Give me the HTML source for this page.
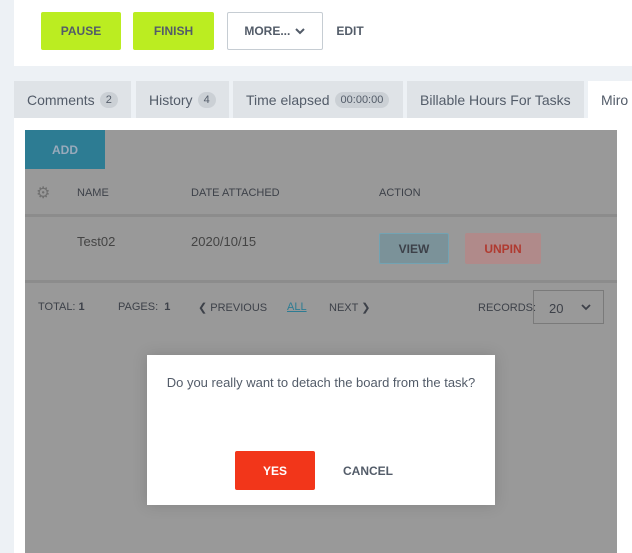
<!DOCTYPE html>
<html><head><style>
*{box-sizing:border-box;margin:0;padding:0}
body{width:632px;height:553px;overflow:hidden;background:#edf1f5;font-family:"Liberation Sans",sans-serif;position:relative}
.abs{position:absolute}
.card{left:14px;top:0;width:618px;height:66px;background:#fff}
.btn{position:absolute;top:12px;height:38px;font-size:12px;font-weight:bold;color:#535c69;display:flex;align-items:center;justify-content:center;border-radius:2px}
.g{background:#bbed21}
.tab{position:absolute;top:81px;height:37px;background:#dfe3e7;color:#535c69;font-size:14px;display:flex;align-items:center;padding-left:13px;white-space:nowrap;overflow:hidden}
.cnt{display:inline-block;background:#cbd0d5;border-radius:9px;font-size:11px;padding:2px 6px;margin-left:5px;color:#535c69}
.content{left:14px;top:118px;width:618px;height:435px;background:#fff}
.ov{left:25px;top:130px;width:592px;height:423px;background:#999}
.t{position:absolute;font-size:11px;color:#3d4149}
</style></head><body>
<div class="abs card"></div>
<div class="btn g" style="left:41px;width:80px">PAUSE</div>
<div class="btn g" style="left:133px;width:81px">FINISH</div>
<div class="btn" style="left:227px;width:96px;border:1px solid #c6cdd3">MORE...&nbsp;<svg width="12" height="8" viewBox="0 0 12 8"><path d="M2 2l4 4 4-4" stroke="#535c69" stroke-width="2" fill="none"/></svg></div>
<div class="btn" style="left:333px;width:34px">EDIT</div>
<div class="tab" style="left:14px;width:117px">Comments<span class="cnt">2</span></div>
<div class="tab" style="left:136px;width:93px">History<span class="cnt">4</span></div>
<div class="tab" style="left:233px;width:170px">Time elapsed<span class="cnt">00:00:00</span></div>
<div class="tab" style="left:407px;width:177px">Billable Hours For Tasks</div>
<div class="tab" style="left:588px;width:44px;background:#fff">Miro</div>
<div class="abs content"></div>
<div class="abs ov">
 <div class="abs" style="left:0;top:0;width:80px;height:39px;background:#2d7c93;color:#9ab;font-size:12px;font-weight:bold;display:flex;align-items:center;justify-content:center">ADD</div>
 <div class="t" style="left:11px;top:53px;color:#6f6f6f;font-size:16px">⚙</div>
 <div class="t" style="left:52px;top:57px">NAME</div>
 <div class="t" style="left:166px;top:57px">DATE ATTACHED</div>
 <div class="t" style="left:354px;top:57px">ACTION</div>
 <div class="abs" style="left:0;top:84px;width:592px;height:3px;background:#8c8c8c"></div>
 <div class="t" style="left:52px;top:104px;font-size:13px;color:#444">Test02</div>
 <div class="t" style="left:166px;top:104px;font-size:13px;color:#444">2020/10/15</div>
 <div class="abs" style="left:354px;top:103px;width:70px;height:31px;background:#7b9299;border:1px solid #72a3b3;border-radius:2px;font-size:12px;font-weight:bold;color:#3d4149;display:flex;align-items:center;justify-content:center">VIEW</div>
 <div class="abs" style="left:440px;top:103px;width:76px;height:31px;background:#b08a8a;border-radius:2px;font-size:12px;font-weight:bold;color:#b03a30;display:flex;align-items:center;justify-content:center">UNPIN</div>
 <div class="abs" style="left:0;top:150px;width:592px;height:3px;background:#8c8c8c"></div>
 <div class="t" style="left:13px;top:171px">TOTAL: <b>1</b></div>
 <div class="t" style="left:93px;top:171px">PAGES:&nbsp; <b>1</b></div>
 <div class="t" style="left:173px;top:171px">❮ PREVIOUS</div>
 <div class="t" style="left:262px;top:171px;color:#2d7c93;text-decoration:underline">ALL</div>
 <div class="t" style="left:304px;top:171px">NEXT ❯</div>
 <div class="t" style="left:453px;top:172px">RECORDS:</div>
 <div class="abs" style="left:508px;top:160px;width:71px;height:34px;border:1px solid #7a7a7a;font-size:13px;color:#3d4149;padding:10px 0 0 15px">20<svg style="position:absolute;left:47px;top:13px" width="10" height="7" viewBox="0 0 10 7"><path d="M1 1l4 4 4-4" stroke="#3d4149" stroke-width="1.8" fill="none"/></svg></div>
 <div class="abs" style="left:122px;top:225px;width:348px;height:150px;background:#fff;box-shadow:0 0 14px rgba(0,0,0,.15)">
  <div style="position:absolute;left:0;width:100%;top:20px;text-align:center;font-size:13px;color:#535c69">Do you really want to detach the board from the task?</div>
  <div class="abs" style="left:88px;top:96px;width:80px;height:39px;background:#f2361a;border-radius:2px;color:#fff;font-size:12px;font-weight:bold;display:flex;align-items:center;justify-content:center">YES</div>
  <div class="abs" style="left:196px;top:109px;font-size:12px;font-weight:bold;color:#535c69">CANCEL</div>
 </div>
</div>
</body></html>
